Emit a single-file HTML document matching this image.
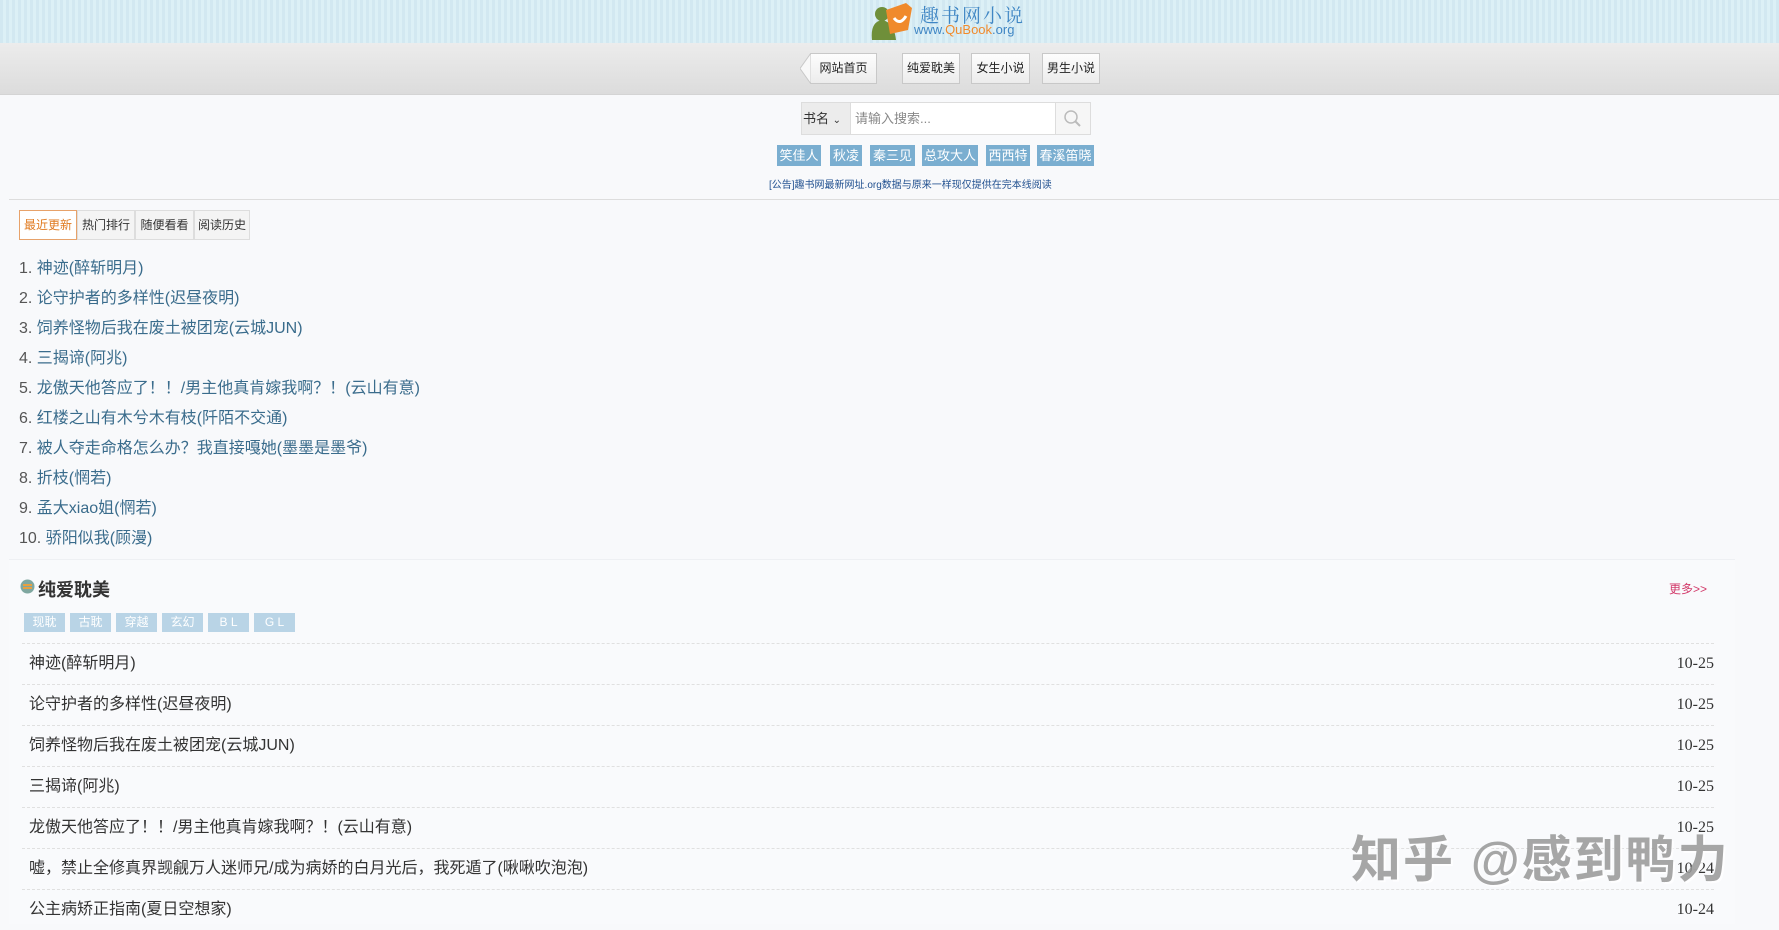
<!DOCTYPE html>
<html><head><meta charset="utf-8">
<style>
*{margin:0;padding:0;box-sizing:border-box}
body{width:1779px;height:924px;overflow:hidden;background:#f8f9fb;font-family:"Liberation Sans","Microsoft YaHei","Noto Sans CJK SC",sans-serif;position:relative;color:#333}
.top{position:absolute;left:0;top:0;width:1779px;height:43px;background:#d6ecf4;background-image:repeating-linear-gradient(90deg,#d2e8f1 0 3px,#dcf0f6 3px 6px)}
.nav{position:absolute;left:0;top:43px;width:1779px;height:52px;background:linear-gradient(#ececec,#dcdcdc);border-bottom:1px solid #d4d4d4}
.btn{position:absolute;top:10px;height:31px;border:1px solid #c8c8c8;background:linear-gradient(#fdfdfd,#ececec);font-size:12px;line-height:29px;text-align:center;color:#222}
.abs{position:absolute}
.tag{position:absolute;top:145px;height:21px;background:#7aaed0;color:#fff;font-size:13px;line-height:21px;text-align:center}
.tab{position:absolute;top:210px;height:30px;border:1px solid #ddd;background:#f4f4f4;font-size:12px;line-height:28px;text-align:center;color:#333}
.li{position:absolute;left:19px;font-size:16px;color:#3a6c8c}
.li span{color:#555}
.st{position:absolute;top:613px;width:41px;height:19px;background:#b9d4e6;color:#fff;font-size:12px;line-height:19px;text-align:center}
.row{position:absolute;left:22px;width:1692px;height:41px;border-top:1px dashed #e0e0e0;font-size:16px;color:#333;line-height:40px;padding-left:7px}
.row b{position:absolute;right:0;top:0;font-weight:normal;font-family:"Liberation Serif",serif;font-size:16px}
</style></head><body>
<div class="top"></div>
<svg class="abs" style="left:868px;top:0" width="50" height="42" viewBox="0 0 50 42"><circle cx="14" cy="14" r="7" fill="#6f8f3a"/><path d="M4 40 Q2 22 14 20 Q26 22 28 40Z" fill="#6f8f3a"/><path d="M18 10 L38 3 L44 8 L40 30 L22 34Z" fill="#f08a2c"/><path d="M26 18 Q32 26 38 16" stroke="#fff" stroke-width="3" fill="none"/></svg>
<div class="abs" style="left:920px;top:1px;font-size:19px;color:#3f86c4;letter-spacing:2px;font-family:'Noto Serif CJK SC',serif">趣书网小说</div>
<div class="abs" style="left:914px;top:22px;font-size:13px;color:#3f86c4">www.<span style="color:#f08a2c">QuBook</span>.org</div>
<div class="nav">
<svg class="abs" style="left:800px;top:10px" width="12" height="31"><path d="M11 0 L0 15.5 L11 31Z" fill="#f8f8f8" stroke="#c8c8c8"/></svg>
<div class="btn" style="left:811px;width:66px;border-left:none">网站首页</div>
<div class="btn" style="left:902px;width:58px">纯爱耽美</div>
<div class="btn" style="left:971px;width:59px">女生小说</div>
<div class="btn" style="left:1042px;width:58px">男生小说</div>
</div>
<div class="abs" style="left:801px;top:102px;width:50px;height:33px;background:#ececec;border:1px solid #ddd;font-size:13px;line-height:31px;padding-left:1px">书名 <span style="font-size:10px">⌄</span></div>
<div class="abs" style="left:851px;top:102px;width:205px;height:33px;background:#fff;border:1px solid #ddd;border-left:none;font-size:13px;line-height:31px;padding-left:4px;color:#888">请输入搜索...</div>
<div class="abs" style="left:1056px;top:102px;width:35px;height:33px;background:#f6f6f6;border:1px solid #ddd;border-left:none"><svg width="33" height="31"><circle cx="15" cy="14" r="6" stroke="#bbb" stroke-width="1.5" fill="none"/><path d="M19.5 18.5 L24 23" stroke="#bbb" stroke-width="2"/></svg></div>
<div class="tag" style="left:777px;width:44px">笑佳人</div>
<div class="tag" style="left:830px;width:32px">秋凌</div>
<div class="tag" style="left:870px;width:45px">秦三见</div>
<div class="tag" style="left:922px;width:56px">总攻大人</div>
<div class="tag" style="left:986px;width:44px">西西特</div>
<div class="tag" style="left:1037px;width:57px">春溪笛晓</div>
<div class="abs" style="left:769px;top:176px;font-size:10px;color:#1f4f8f">[公告]趣书网最新网址.org数据与原来一样现仅提供在完本线阅读</div>
<div class="abs" style="left:9px;top:199px;width:1770px;height:1px;background:#ddd"></div>
<div class="tab" style="left:19px;width:58px;background:#fff;color:#e07a1f;border-color:#e7a26a">最近更新</div>
<div class="tab" style="left:77px;width:58px">热门排行</div>
<div class="tab" style="left:135px;width:59px">随便看看</div>
<div class="tab" style="left:194px;width:56px">阅读历史</div>
<div class="li" style="top:254px"><span>1.</span> 神迹(醉斩明月)</div>
<div class="li" style="top:284px"><span>2.</span> 论守护者的多样性(迟昼夜明)</div>
<div class="li" style="top:314px"><span>3.</span> 饲养怪物后我在废土被团宠(云城JUN)</div>
<div class="li" style="top:344px"><span>4.</span> 三揭谛(阿兆)</div>
<div class="li" style="top:374px"><span>5.</span> 龙傲天他答应了！！/男主他真肯嫁我啊？！(云山有意)</div>
<div class="li" style="top:404px"><span>6.</span> 红楼之山有木兮木有枝(阡陌不交通)</div>
<div class="li" style="top:434px"><span>7.</span> 被人夺走命格怎么办？我直接嘎她(墨墨是墨爷)</div>
<div class="li" style="top:464px"><span>8.</span> 折枝(惘若)</div>
<div class="li" style="top:494px"><span>9.</span> 孟大xiao姐(惘若)</div>
<div class="li" style="top:524px"><span>10.</span> 骄阳似我(顾漫)</div>
<div class="abs" style="left:9px;top:559px;width:1726px;height:365px;background:#f9fafc;border-top:1px solid #eef0f3"></div>
<svg class="abs" style="left:20px;top:579px" width="15" height="15"><circle cx="7.5" cy="7.5" r="7" fill="#7fa7a0"/><path d="M3 6h9M3 9h9" stroke="#e8a040" stroke-width="2"/></svg>
<div class="abs" style="left:38px;top:576px;font-size:18px;font-weight:bold;color:#333">纯爱耽美</div>
<div class="abs" style="left:1669px;top:580px;font-size:12px;color:#d23a6a">更多&gt;&gt;</div>
<div class="st" style="left:24px">现耽</div>
<div class="st" style="left:70px">古耽</div>
<div class="st" style="left:116px">穿越</div>
<div class="st" style="left:162px">玄幻</div>
<div class="st" style="left:208px">B L</div>
<div class="st" style="left:254px">G L</div>
<div class="row" style="top:643px">神迹(醉斩明月)<b>10-25</b></div>
<div class="row" style="top:684px">论守护者的多样性(迟昼夜明)<b>10-25</b></div>
<div class="row" style="top:725px">饲养怪物后我在废土被团宠(云城JUN)<b>10-25</b></div>
<div class="row" style="top:766px">三揭谛(阿兆)<b>10-25</b></div>
<div class="row" style="top:807px">龙傲天他答应了！！/男主他真肯嫁我啊？！(云山有意)<b>10-25</b></div>
<div class="row" style="top:848px">嘘，禁止全修真界觊觎万人迷师兄/成为病娇的白月光后，我死遁了(啾啾吹泡泡)<b>10-24</b></div>
<div class="row" style="top:889px">公主病矫正指南(夏日空想家)<b>10-24</b></div>
<div class="abs" style="left:1351px;top:820px;font-size:50px;font-weight:bold;color:rgba(150,150,150,0.85);text-shadow:2px 2px 0 rgba(255,255,255,0.8);letter-spacing:2px;white-space:nowrap">知乎 @感到鸭力</div>
</body></html>
